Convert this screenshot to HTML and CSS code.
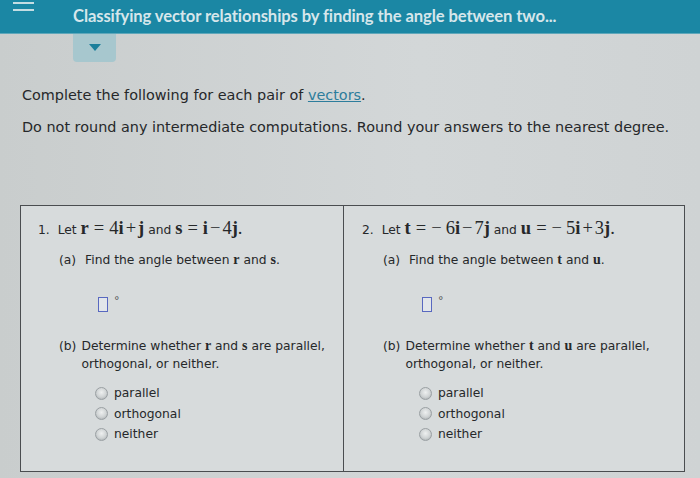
FILE: index.html
```html
<!DOCTYPE html>
<html>
<head>
<meta charset="utf-8">
<link rel="stylesheet" href="styles.css">
</head>
<body>
<header class="topbar">
  <div class="burger"><span></span><span></span></div>
  <div class="title">Classifying vector relationships by finding the angle between two...</div>
</header>
<div class="tab"><span class="tri"></span></div>
<section class="intro">
  <p class="l1">Complete the following for each pair of <a class="link">vectors</a>.</p>
  <p class="l2">Do not round any intermediate computations. Round your answers to the nearest degree.</p>
</section>
<section class="problems">
  <div class="cell left">
    <div class="stem"><span class="num">1.</span> Let <span class="m"><b>r</b><span class="op">=</span>4<b>i</b><span class="op t">+</span><b>j</b></span> and <span class="m"><b>s</b><span class="op">=</span><b>i</b><span class="op t">−</span>4<b>j</b>.</span></div>
    <div class="part a"><span class="lbl">(a)</span> Find the angle between <b class="mv">r</b> and <b class="mv">s</b>.</div>
    <div class="answer"><span class="box"></span><span class="deg">°</span></div>
    <div class="part b"><span class="lbl">(b)</span><div class="btxt"><div class="bl">Determine whether <b class="mv">r</b> and <b class="mv">s</b> are parallel,</div><div class="bl">orthogonal, or neither.</div></div></div>
    <div class="radios">
      <div class="opt"><span class="radio"></span>parallel</div>
      <div class="opt"><span class="radio"></span>orthogonal</div>
      <div class="opt"><span class="radio"></span>neither</div>
    </div>
  </div>
  <div class="cell right">
    <div class="stem"><span class="num">2.</span> Let <span class="m"><b>t</b><span class="op">=</span>−<span class="sp"></span>6<b>i</b><span class="op t">−</span>7<b>j</b></span> and <span class="m"><b>u</b><span class="op">=</span>−<span class="sp"></span>5<b>i</b><span class="op t">+</span>3<b>j</b>.</span></div>
    <div class="part a"><span class="lbl">(a)</span> Find the angle between <b class="mv">t</b> and <b class="mv">u</b>.</div>
    <div class="answer"><span class="box"></span><span class="deg">°</span></div>
    <div class="part b"><span class="lbl">(b)</span><div class="btxt"><div class="bl">Determine whether <b class="mv">t</b> and <b class="mv">u</b> are parallel,</div><div class="bl">orthogonal, or neither.</div></div></div>
    <div class="radios">
      <div class="opt"><span class="radio"></span>parallel</div>
      <div class="opt"><span class="radio"></span>orthogonal</div>
      <div class="opt"><span class="radio"></span>neither</div>
    </div>
  </div>
</section>
</body>
</html>
```
FILE: styles.css
```css
html, body {
  margin: 0;
  padding: 0;
}
body {
  width: 700px;
  height: 478px;
  overflow: hidden;
  background: linear-gradient(to right, #c9cdcd, #d3d7d8 60%, #cfd3d4);
  font-family: "DejaVu Sans", Verdana, sans-serif;
  color: #26282a;
}
.topbar {
  height: 34px;
  background: #1b87a4;
  border-bottom: 1px solid #5fa7ba;
  display: flex;
  align-items: center;
  box-sizing: border-box;
}
.burger {
  width: 21px;
  margin-left: 13px;
  align-self: flex-start;
  margin-top: 2px;
  display: flex;
  flex-direction: column;
  gap: 5px;
}
.burger span {
  display: block;
  height: 2px;
  background: #c4dde3;
}
.title {
  margin-left: 39px;
  margin-top: -2px;
  font-family: Lato, "Open Sans", sans-serif;
  font-weight: 700;
  font-size: 16.6px;
  color: #d6e6eb;
  letter-spacing: -0.1px;
}
.tab {
  margin-left: 73px;
  width: 43px;
  height: 28px;
  background: #a7c7ce;
  border-radius: 0 0 4px 4px;
  display: flex;
  justify-content: center;
  padding-top: 10px;
  box-sizing: border-box;
}
.tri {
  width: 0;
  height: 0;
  border-left: 6px solid transparent;
  border-right: 6px solid transparent;
  border-top: 7px solid #1b7f9b;
}
.intro {
  padding-left: 22px;
  font-size: 14.4px;
}
.intro p {
  margin: 0;
  line-height: 20px;
}
.intro .l1 { margin-top: 23px; }
.intro .l2 { margin-top: 12px; }
.link {
  color: #2d7d9c;
  text-decoration: underline;
}
.problems {
  margin-top: 68px;
  margin-left: 20px;
  width: 663px;
  display: grid;
  grid-template-columns: 323px 340px;
  height: 265px;
  border: 1.5px solid #4a4d50;
  background: #d7dbdc;
  font-size: 12.3px;
}
.cell {
  padding: 13px 8px 0 17px;
}
.cell.left {
  border-right: 1.5px solid #4a4d50;
}
.cell.right {
  padding-left: 18px;
}
.stem {
  line-height: 20px;
}
.num { margin-right: 4px; }
.m {
  font-family: "Liberation Serif", "Times New Roman", serif;
  font-size: 18.5px;
  line-height: 1;
}
.m b { font-weight: 700; }
.op { margin: 0 5px; }
.op.t { margin: 0 2px 0 2px; }
.sp { display: inline-block; width: 4px; }
.mv {
  font-family: "Liberation Serif", "Times New Roman", serif;
  font-size: 14px;
  line-height: 1;
}
.part {
  margin-left: 21px;
}
.part.a {
  margin-top: 10px;
  line-height: 20px;
}
.lbl { margin-right: 5px; }
.answer {
  margin-top: 27px;
  margin-left: 60px;
  display: flex;
  align-items: flex-start;
  height: 16px;
}
.box {
  width: 8px;
  height: 13px;
  border: 1.5px solid #5868c0;
  background: #e2e6ea;
}
.deg {
  margin-left: 6px;
  font-size: 11px;
  line-height: 8px;
  color: #555;
}
.part.b {
  margin-top: 24px;
  line-height: 18px;
  display: flex;
}
.part.b .lbl { margin-right: 5px; flex: none; }
.btxt { display: block; }
.bl { white-space: nowrap; }
.radios {
  margin-left: 57px;
  margin-top: 10px;
}
.opt {
  display: flex;
  align-items: center;
  height: 20.5px;
}
.radio {
  width: 11px;
  height: 11px;
  border-radius: 50%;
  background: radial-gradient(circle at 50% 40%, #eef0f0 0%, #cfd3d4 55%, #9da2a5 100%);
  border: 1px solid #9aa0a3;
  margin-right: 6px;
  flex: none;
}
```
